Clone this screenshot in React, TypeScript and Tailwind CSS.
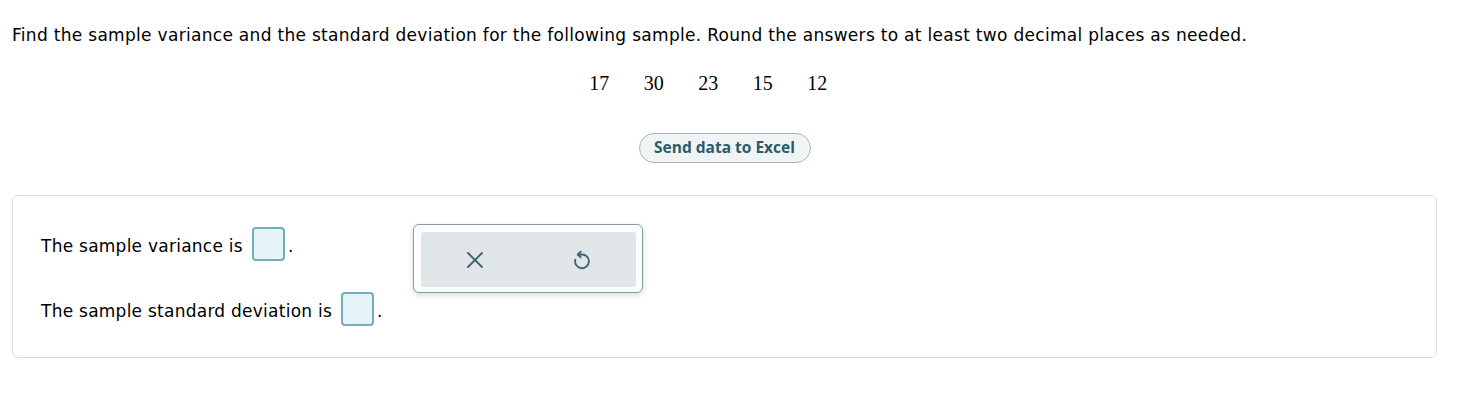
import React from "react";
import { X } from "lucide-react";

const data = [17, 30, 23, 15, 12];

const AnswerBox = () => (
	<span className="inline-block align-middle w-[33px] h-[34px] rounded-[4px] border-2 border-[#72afba] bg-[#e6f4f8]" />
);

// reset arrow, drawn by hand (arrowhead at top-left)
const ResetIcon = () => (
	<svg width="22" height="22" viewBox="0 0 24 24" fill="none" stroke="currentColor" strokeWidth="2" strokeLinecap="round" strokeLinejoin="round" className="text-[#3d6470]">
		<path d="M10.5 3 L7.5 6 L10.5 9" />
		<path d="M7.5 6 H12 A7.5 7.5 0 1 1 4.76 11.56" />
	</svg>
);

const App = () => {
	return (
		<div className="w-[1449px] h-[417px] bg-white px-3 text-black font-['DejaVu_Sans',Verdana,sans-serif] tracking-[0.25px]">
			<p className="pt-[23px] text-[17px] leading-6 tracking-[0.3px]">
				Find the sample variance and the standard deviation for the following sample. Round the answers to at least two decimal places as needed.
			</p>

			<div className="mt-[24px] flex justify-center pl-[2px] font-['Liberation_Serif',serif] text-[20px] leading-6 tracking-normal">
				{data.map((n) => (
					<span key={n} className="w-[54.5px]">
						{n}
					</span>
				))}
			</div>

			<div className="mt-[38px] flex justify-center">
				<button className="h-[30px] w-[172px] rounded-full border border-[#a3b6bc] bg-[#f1f4f5] text-[15.5px] font-bold tracking-normal text-[#2c5a69] font-['Open_Sans',sans-serif]">
					Send data to Excel
				</button>
			</div>

			<div className="relative mt-[32px] h-[163px] rounded-[6px] border border-[#d6e0e1] px-[28px] pt-[31px]">
				<div className="flex items-center h-[34px] text-[17px]">
					<span className="mt-[6px]">The sample variance is</span>
					<span className="ml-[9px]">
						<AnswerBox />
					</span>
					<span className="ml-[3px] mt-[6px]">.</span>
				</div>
				<div className="mt-[31px] flex items-center h-[34px] text-[17px]">
					<span className="mt-[6px]">The sample standard deviation is</span>
					<span className="ml-[9px]">
						<AnswerBox />
					</span>
					<span className="ml-[3px] mt-[6px]">.</span>
				</div>

				<div className="absolute left-[400px] top-[28px] w-[230px] h-[69px] rounded-[6px] border border-[#7f9ca4] bg-white p-[7px] shadow-[0_2px_6px_rgba(0,0,0,0.15)]">
					<div className="flex h-[55px] w-[215px] rounded-[3px] bg-[#e0e6e8]">
						<div className="flex flex-1 items-center justify-center">
							<X size={28} strokeWidth={1.6} className="text-[#3d6470]" />
						</div>
						<div className="flex flex-1 items-center justify-center">
							<ResetIcon />
						</div>
					</div>
				</div>
			</div>
		</div>
	);
};

export default App;
